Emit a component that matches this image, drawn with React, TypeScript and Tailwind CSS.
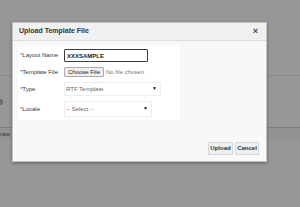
import { useState } from 'react';

export default function App() {
  const [layoutName, setLayoutName] = useState('XXXSAMPLE');

  return (
    <div className="relative w-[300px] h-[207px] overflow-hidden bg-[#979797] font-['Liberation_Sans',Arial,sans-serif]">
      {/* page behind the overlay */}
      <div className="h-[75px]" />
      <div className="border-t border-[#8a8a8a]" />
      <div className="h-[51px] flex items-center">
        <div className="w-[3px] h-[6px] rounded-r-[2px] bg-[#6f6f6f]" />
      </div>
      <div className="border-t border-[#7c7c7c]" />
      <div className="h-[12px] flex items-center bg-[#939393]">
        <span className="text-[6px] leading-none text-[#3a3a3a]">rate</span>
      </div>

      {/* modal */}
      <div className="absolute left-[12px] top-[22px] w-[255px] h-[140px] flex flex-col bg-[#f8f8f8] border border-[#c4c4c4] shadow-[0_1px_3px_rgba(0,0,0,0.35)]">
        <div className="h-[18px] flex items-center justify-between px-[6px] bg-[#f0f0f0] border-b border-[#d9dde0]">
          <span className="text-[7px] font-bold text-[#333]">Upload Template File</span>
          <span className="text-[9px] font-bold leading-none text-[#444] mr-[2px]">×</span>
        </div>

        <div className="flex-1 flex flex-col px-[5px] pt-[5px] pb-[6px]">
          <div className="w-[162px] h-[74px] bg-white flex flex-col px-[2px] pt-[3px] gap-[5px]">
            <div className="flex items-center h-[13px]">
              <span className="w-[44px] text-[6px] text-[#333]"><span className="text-[#3a6ea5]">*</span>Layout Name</span>
              <input
                value={layoutName}
                onChange={(e) => setLayoutName(e.target.value)}
                className="w-[84px] h-[13px] border border-[#3c3c3c] rounded-[1px] px-[2px] text-[6px] font-bold text-[#222] outline-none"
              />
            </div>
            <div className="flex items-center h-[10px]">
              <span className="w-[44px] text-[6px] text-[#333]"><span className="text-[#3a6ea5]">*</span>Template File</span>
              <button className="h-[10px] px-[3px] border border-[#a9a9a9] rounded-[1px] bg-[#efefef] text-[6px] text-[#222]">Choose File</button>
              <span className="ml-[2px] text-[6px] text-[#777]">No file chosen</span>
            </div>
            <div className="flex items-center h-[14px]">
              <span className="w-[44px] text-[6px] text-[#333]"><span className="text-[#3a6ea5]">*</span>Type</span>
              <div className="w-[97px] h-[14px] flex items-center justify-between border border-[#eceef0] px-[1px] bg-white">
                <span className="text-[6px] text-[#666]">RTF Template</span>
                <span className="text-[5px] text-[#111] mr-[2px]">▼</span>
              </div>
            </div>
            <div className="flex items-center h-[16px]">
              <span className="w-[44px] text-[6px] text-[#333]"><span className="text-[#3a6ea5]">*</span>Locale</span>
              <div className="w-[88px] h-[16px] flex items-center justify-between border border-[#eceef0] px-[1px] bg-white">
                <span className="text-[6px] text-[#666]">-- Select --</span>
                <span className="text-[5px] text-[#111] mr-[2px]">▼</span>
              </div>
            </div>
          </div>

          <div className="flex-1" />
          <div className="flex justify-end gap-[2px] pr-[2px]">
            <button className="h-[13px] w-[25px] border border-[#d3d8dc] rounded-[1px] bg-[#eef0f2] text-[6px] font-bold text-[#333]">Upload</button>
            <button className="h-[13px] w-[24px] border border-[#d3d8dc] rounded-[1px] bg-[#eef0f2] text-[6px] font-bold text-[#333]">Cancel</button>
          </div>
        </div>
      </div>
    </div>
  );
}
